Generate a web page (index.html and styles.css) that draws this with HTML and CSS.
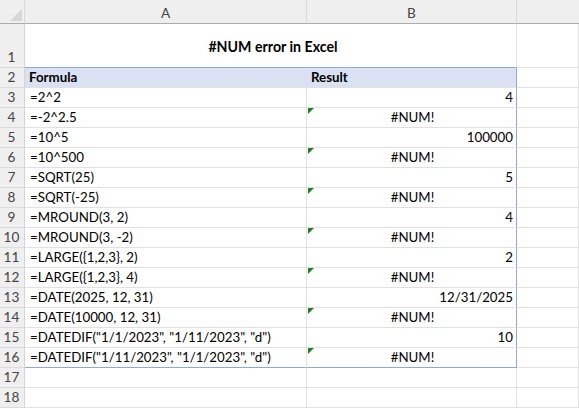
FILE: index.html
```html
<!DOCTYPE html>
<html>
<head>
<meta charset="utf-8">
<link rel="stylesheet" href="styles.css">
</head>
<body>
<div class="sheet">
  <div class="hd corner"><svg width="24" height="23" viewBox="0 0 24 23"><polygon points="22,9 22,21 10,21" fill="#d6d6d6"/></svg></div>
  <div class="hd col">A</div>
  <div class="hd col">B</div>
  <div class="hd col last"></div>

  <div class="rn">1</div>
  <div class="c title">#NUM error in Excel</div>
  <div class="c"></div>

  <div class="rn">2</div>
  <div class="c th">Formula</div>
  <div class="c th b">Result</div>
  <div class="c"></div>

  <div class="rn">3</div><div class="c">=2^2</div><div class="c b r">4</div><div class="c"></div>
  <div class="rn">4</div><div class="c">=-2^2.5</div><div class="c b m err">#NUM!</div><div class="c"></div>
  <div class="rn">5</div><div class="c">=10^5</div><div class="c b r">100000</div><div class="c"></div>
  <div class="rn">6</div><div class="c">=10^500</div><div class="c b m err">#NUM!</div><div class="c"></div>
  <div class="rn">7</div><div class="c">=SQRT(25)</div><div class="c b r">5</div><div class="c"></div>
  <div class="rn">8</div><div class="c">=SQRT(-25)</div><div class="c b m err">#NUM!</div><div class="c"></div>
  <div class="rn">9</div><div class="c">=MROUND(3, 2)</div><div class="c b r">4</div><div class="c"></div>
  <div class="rn">10</div><div class="c">=MROUND(3, -2)</div><div class="c b m err">#NUM!</div><div class="c"></div>
  <div class="rn">11</div><div class="c">=LARGE({1,2,3}, 2)</div><div class="c b r">2</div><div class="c"></div>
  <div class="rn">12</div><div class="c">=LARGE({1,2,3}, 4)</div><div class="c b m err">#NUM!</div><div class="c"></div>
  <div class="rn">13</div><div class="c">=DATE(2025, 12, 31)</div><div class="c b r">12/31/2025</div><div class="c"></div>
  <div class="rn">14</div><div class="c">=DATE(10000, 12, 31)</div><div class="c b m err">#NUM!</div><div class="c"></div>
  <div class="rn">15</div><div class="c">=DATEDIF("1/1/2023", "1/11/2023", "d")</div><div class="c b r">10</div><div class="c"></div>
  <div class="rn">16</div><div class="c lastrow">=DATEDIF("1/11/2023", "1/1/2023", "d")</div><div class="c b m err lastrow">#NUM!</div><div class="c"></div>
  <div class="rn">17</div><div class="c"></div><div class="c"></div><div class="c"></div>
  <div class="rn">18</div><div class="c"></div><div class="c"></div><div class="c"></div>
</div>
</body>
</html>
```
FILE: styles.css
```css
html, body {
  margin: 0;
  padding: 0;
  background: #ffffff;
}
.sheet {
  display: grid;
  grid-template-columns: 25px 282px 210px 62px;
  grid-template-rows: 24px 44px repeat(17, 20px);
  font-family: Lato, "Open Sans", sans-serif;
  font-size: 13.3px;
  color: #000;
}
.hd {
  background: #efefef;
  border-bottom: 1px solid #ababab;
  box-sizing: border-box;
  color: #444;
  font-size: 13.6px;
  display: flex;
  align-items: center;
  justify-content: center;
  padding-top: 3px;
}
.col {
  border-right: 1px solid #d8d8d8;
}
.col.last {
  border-right: none;
}
.corner {
  padding: 0;
  border-right: 1px solid #d8d8d8;
  align-items: flex-start;
  justify-content: flex-start;
}
.corner svg {
  display: block;
}
.rn {
  background: #efefef;
  color: #444;
  font-size: 13.6px;
  border-right: 1px solid #d4d4d4;
  border-bottom: 1px solid #dcdcdc;
  box-sizing: border-box;
  display: flex;
  align-items: flex-end;
  justify-content: center;
  line-height: 19px;
  padding-right: 1px;
}
.c {
  box-sizing: border-box;
  border-right: 1px solid #e1e1e1;
  border-bottom: 1px solid #e1e1e1;
  line-height: 20px;
  padding: 0 3px 0 5px;
  white-space: nowrap;
  position: relative;
  display: flex;
  align-items: flex-end;
}
.title {
  grid-column: span 2;
  font-weight: bold;
  font-size: 14.2px;
  justify-content: center;
  align-items: center;
  padding-top: 2px;
  padding-left: 8px;
  border-bottom: 1px solid #8ea9db;
  border-right: 1px solid #e1e1e1;
}
.th {
  background: #d9e1f2;
  font-weight: bold;
  border-right: none;
  border-bottom: 1px solid #e1e1e1;
  padding-left: 4px;
}
.b {
  border-right: 1px solid #8ea9db;
}
.th.b {
  border-right: 1px solid #8ea9db;
}
.r {
  justify-content: flex-end;
}
.m {
  justify-content: center;
}
.lastrow {
  border-bottom: 1px solid #8ea9db;
}
.err::before {
  content: "";
  position: absolute;
  left: 1px;
  top: 0;
  width: 0;
  height: 0;
  border-top: 6px solid #1d7f1d;
  border-right: 6px solid transparent;
}
```
